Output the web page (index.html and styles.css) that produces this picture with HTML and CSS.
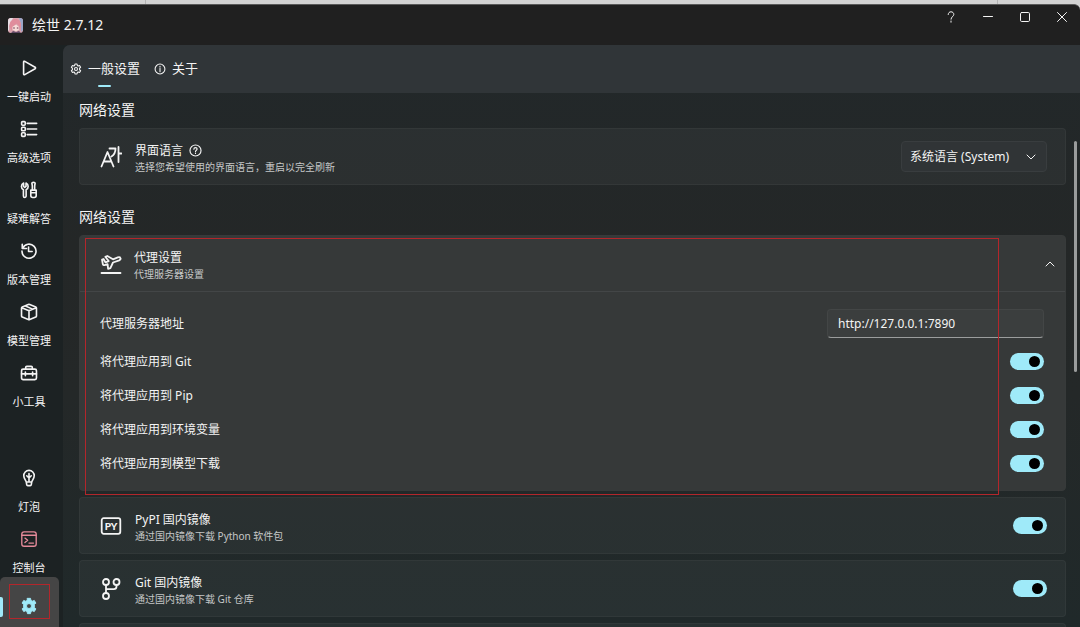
FILE: index.html
```html
<!DOCTYPE html>
<html lang="zh-CN">
<head>
    <meta charset="UTF-8">
    <meta name="viewport" content="width=device-width, initial-scale=1.0">
    <title>绘世 2.7.12</title>
    <link rel="stylesheet" href="styles.css">
</head>
<body>
    <div class="desktop-strip"><span></span><span></span></div>
    <div class="window">
        <header class="titlebar">
            <svg class="app-icon" viewBox="0 0 15 15">
                <rect width="15" height="15" rx="3" fill="#d9a3ae"/>
                <path d="M0 3a3 3 0 0 1 3-3h2L1 8v5L0 12z" fill="#e9dfe6"/>
                <path d="M11 0h1a3 3 0 0 1 3 3v9l-2 2V6z" fill="#9aa6c8"/>
                <path d="M1.500 8C1.500 3 4.500 1 7.500 1S13 3 13 7.500L12.500 13 11 8 8.500 5.500 5 8.500 3.500 13z" fill="#e08d9c"/>
                <path d="M4.500 8.800 8.200 6.500l2.800 2.500v2.500L8 13.500l-3.500-2z" fill="#f7dcd8"/>
                <rect x="5.200" y="9.400" width="1.600" height="1.200" fill="#7d4a62"/>
                <rect x="8.800" y="9.400" width="1.600" height="1.200" fill="#7d4a62"/>
                <path d="M3 15l2-2 3 1 3-1 2 2z" fill="#604a65"/>
            </svg>
            <h1>绘世 2.7.12</h1>
            <div class="window-buttons">
                <button aria-label="帮助"><svg viewBox="0 0 12 12"><path d="M3.200 3.500C3.200 1.900 4.400.8 6 .8s2.800 1.100 2.800 2.600c0 2-2.800 2.500-2.800 4.800M6 10v1.200"/></svg></button>
                <button aria-label="最小化"><svg viewBox="0 0 12 12"><path d="M1.500 5.500h9"/></svg></button>
                <button aria-label="最大化"><svg viewBox="0 0 12 12"><rect x="1.500" y="1.500" width="9" height="9" rx="1.200"/></svg></button>
                <button aria-label="关闭"><svg viewBox="0 0 12 12"><path d="M1.500 1.500l9 9M10.500 1.500l-9 9"/></svg></button>
            </div>
        </header>

        <div class="main">
            <nav class="sidebar">
                <a class="nav-item" href="#launch">
                    <svg viewBox="0 0 20 20"><path d="M4 3.300v13.400c0 .7.700 1 1.300.7l11.500-6.600c.6-.4.6-1.200 0-1.600L5.300 2.600C4.700 2.300 4 2.600 4 3.300z"/></svg>
                    <span>一键启动</span>
                </a>
                <a class="nav-item" href="#advanced">
                    <svg viewBox="0 0 20 20"><rect x="1.800" y="1.800" width="4" height="4" rx="1"/><rect x="1.800" y="8" width="4" height="4" rx="1"/><rect x="1.800" y="14.200" width="4" height="4" rx="1"/><path d="M8 3.800h10.500M8 10h10.500M8 16.200h10.500"/></svg>
                    <span>高级选项</span>
                </a>
                <a class="nav-item" href="#troubleshoot">
                    <svg viewBox="0 0 20 20"><path d="M4 2.200C2.500 2.900 1.600 4.300 1.600 6c0 1.600.9 3 2.200 3.700v7c0 .9.700 1.600 1.500 1.600s1.500-.7 1.500-1.600v-7C8.200 9 9.100 7.600 9.100 6c0-1.700-.9-3.100-2.400-3.800V6L5.300 7.200 4 6z"/><path d="M13.200 2.500c0-.7.900-1 1.800-1s1.800.3 1.800 1l-.5 3v4.700h-2.600V5.500zM12 10.200h6v6c0 1.200-1 2.100-2.100 2.100h-1.800c-1.200 0-2.100-1-2.100-2.100zM12 13h6"/></svg>
                    <span>疑难解答</span>
                </a>
                <a class="nav-item" href="#versions">
                    <svg viewBox="0 0 20 20"><path d="M2.500 2.500v4.700h4.700M2.900 7A7.800 7.800 0 1 1 2.200 10M9.500 5.500v5h4"/></svg>
                    <span>版本管理</span>
                </a>
                <a class="nav-item" href="#models">
                    <svg viewBox="0 0 20 20"><path d="M9.200 1.700 2.500 4.500c-.5.200-.8.600-.8 1.100v8.800c0 .5.300 1 .8 1.200l6.700 2.700c.5.200 1.100.2 1.600 0l6.700-2.700c.5-.2.800-.7.800-1.200V5.600c0-.5-.3-.9-.8-1.100l-6.700-2.800c-.5-.2-1.100-.2-1.600 0zM2 5.200l8 3.300 8-3.300M10 8.500v10M6 3.300l8 3.500"/></svg>
                    <span>模型管理</span>
                </a>
                <a class="nav-item" href="#tools">
                    <svg viewBox="0 0 20 20"><rect x="1.700" y="5.700" width="16.600" height="11.600" rx="1.800"/><path d="M6.300 5.500V4c0-.8.600-1.300 1.300-1.300h4.800c.7 0 1.300.5 1.300 1.300v1.500M1.700 11h16.600M6 9v4M14 9v4"/></svg>
                    <span>小工具</span>
                </a>
                <a class="nav-item nav-bottom" href="#theme">
                    <svg viewBox="0 0 20 20"><path d="M7 14.500c-.3-1.800-2.800-3.600-2.800-7A5.800 5.800 0 0 1 10 1.500a5.800 5.800 0 0 1 5.800 6c0 3.400-2.500 5.200-2.800 7zM7 14.500l.4 2.700c.1.800.6 1.300 1.300 1.300h2.600c.7 0 1.200-.5 1.300-1.300l.4-2.700M10 5v9M7.500 7.500 10 10l2.500-2.500"/></svg>
                    <span>灯泡</span>
                </a>
                <a class="nav-item" href="#console">
                    <svg class="pink" viewBox="0 0 20 20"><rect x="2" y="2" width="16" height="16" rx="2.500"/><path d="M2 5.800h16M5.500 9l3 2.500-3 2.500M10 14.500h5"/></svg>
                    <span>控制台</span>
                </a>
                <a class="nav-item active" href="#settings" aria-label="设置">
                    <svg class="gear" viewBox="0 0 20 20"><path fill-rule="evenodd" d="M8.300 1.500h3.400l.5 2.300 1.500.8 2.200-.8 1.800 3-1.700 1.600v3.200l1.700 1.600-1.800 3-2.200-.8-1.500.8-.5 2.300H8.300l-.5-2.300-1.500-.8-2.200.8-1.800-3L4 11.600V8.400L2.300 6.800l1.800-3 2.200.8 1.500-.8zM10 7.200a2.800 2.800 0 1 0 0 5.600 2.800 2.800 0 0 0 0-5.600z"/></svg>
                    <i class="mark nav-mark"></i>
                </a>
            </nav>

            <section class="content">
                <div class="tabs">
                    <a class="tab selected" href="#general">
                        <svg viewBox="0 0 20 20"><path d="M8.300 1.800h3.400l.5 2.300 1.500.8 2.200-.8 1.800 3-1.700 1.500v2.800l1.700 1.500-1.800 3-2.200-.8-1.500.8-.5 2.300H8.300l-.5-2.300-1.500-.8-2.200.8-1.800-3L4 11.400V8.600L2.300 7.100l1.800-3 2.200.8 1.500-.8z"/><circle cx="10" cy="10" r="2.500"/></svg>
                        <span>一般设置</span>
                    </a>
                    <a class="tab" href="#about">
                        <svg viewBox="0 0 20 20"><circle cx="10" cy="10" r="8.200"/><path d="M10 9v5.500M10 5.500v1"/></svg>
                        <span>关于</span>
                    </a>
                </div>

                <div class="page">
                    <div class="settings">
                        <h2>网络设置</h2>
                        <div class="card">
                            <svg class="card-icon" viewBox="0 0 22 22"><path d="M1.500 20.500 7.500 6l6 14.500M3.800 15.500h7.600M9.500 2.500h6c0 4-1.500 6.500-4 8M18.500 1v15M18.500 7.500h3"/></svg>
                            <div class="card-text">
                                <label for="language">界面语言 <svg viewBox="0 0 20 20"><circle cx="10" cy="10" r="8.500"/><path d="M7.500 8c0-1.500 1-2.500 2.500-2.500s2.500 1 2.500 2.300c0 1.700-2.500 2-2.500 3.900M10 14v.5"/></svg></label>
                                <p>选择您希望使用的界面语言，重启以完全刷新</p>
                            </div>
                            <div class="select-box">
                                <select id="language">
                                    <option>系统语言 (System)</option>
                                </select>
                                <svg viewBox="0 0 12 12"><path d="M2 4l4 4 4-4"/></svg>
                            </div>
                        </div>

                        <h2>网络设置</h2>
                        <div class="expander">
                            <div class="expander-head">
                                <svg class="card-icon" viewBox="0 0 22 22"><path d="M1.500 20h19M2 6.500l.8 4.500c.2 1 .9 1.400 1.800 1.100l3-.9.500 4.600 2.300-.7 2.600-5.600 6.200-2.200c1.200-.5 1.700-1.500 1.300-2.200-.4-.9-1.500-1.100-2.700-.7L13 6.300 7.300 3l-2 .8 3.400 4.300-3.300 1.200L3.500 6z"/></svg>
                                <div class="card-text">
                                    <h3>代理设置</h3>
                                    <p>代理服务器设置</p>
                                </div>
                                <button class="collapse" aria-label="折叠"><svg viewBox="0 0 12 12"><path d="M2 8l4-4 4 4"/></svg></button>
                            </div>
                            <div class="expander-body">
                                <div class="row address">
                                    <label for="proxy">代理服务器地址</label>
                                    <input type="text" id="proxy" value="http://127.0.0.1:7890">
                                </div>
                                <div class="row">
                                    <label for="git">将代理应用到 Git</label>
                                    <input type="checkbox" class="toggle" id="git" checked>
                                </div>
                                <div class="row">
                                    <label for="pip">将代理应用到 Pip</label>
                                    <input type="checkbox" class="toggle" id="pip" checked>
                                </div>
                                <div class="row">
                                    <label for="env">将代理应用到环境变量</label>
                                    <input type="checkbox" class="toggle" id="env" checked>
                                </div>
                                <div class="row">
                                    <label for="download">将代理应用到模型下载</label>
                                    <input type="checkbox" class="toggle" id="download" checked>
                                </div>
                            </div>
                            <i class="mark proxy-mark"></i>
                        </div>

                        <div class="card">
                            <svg class="card-icon" viewBox="0 0 22 22"><rect x="1.700" y="3.200" width="18.600" height="15.600" rx="2"/><text x="11" y="15">PY</text></svg>
                            <div class="card-text">
                                <label for="pypi-mirror">PyPI 国内镜像</label>
                                <p>通过国内镜像下载 Python 软件包</p>
                            </div>
                            <input type="checkbox" class="toggle" id="pypi-mirror" checked>
                        </div>
                        <div class="card">
                            <svg class="card-icon" viewBox="0 0 22 22"><circle cx="6" cy="4" r="3"/><circle cx="16.500" cy="4" r="3"/><circle cx="6" cy="18" r="3"/><path d="M6 7v8M16.500 7v1.500c0 1.700-1 2.700-2.700 2.700H6"/></svg>
                            <div class="card-text">
                                <label for="git-mirror">Git 国内镜像</label>
                                <p>通过国内镜像下载 Git 仓库</p>
                            </div>
                            <input type="checkbox" class="toggle" id="git-mirror" checked>
                        </div>
                        <div class="card"></div>
                    </div>
                    <div class="scrollbar"></div>
                </div>
            </section>
        </div>
    </div>
</body>
</html>
```
FILE: styles.css
```css
* {
    box-sizing: border-box;
}
body {
    margin: 0;
    height: 100vh;
    display: flex;
    flex-direction: column;
    overflow: hidden;
    background-color: #d3d3d3;
    color: #f4f4f4;
    font-family: "Noto Sans", "Noto Sans CJK SC", sans-serif;
    font-size: 12px;
}
h1, h2, h3, p {
    margin: 0;
    font-weight: normal;
}
a {
    color: inherit;
    text-decoration: none;
}
button, input, select {
    font: inherit;
    color: inherit;
    margin: 0;
}
button {
    padding: 0;
    border: none;
    background: none;
}
svg {
    display: block;
    flex-shrink: 0;
    fill: none;
    stroke: currentColor;
    stroke-width: 1.8;
    stroke-linejoin: round;
    stroke-linecap: round;
}
.desktop-strip {
    flex: 0 0 4px;
    display: flex;
    justify-content: space-between;
    padding: 0 82px 0 145px;
}
.desktop-strip span {
    width: 1px;
    background-color: #b4b4b4;
}
.window {
    flex: 1;
    min-height: 0;
    display: flex;
    flex-direction: column;
    border-top: 1px solid #5a5a5a;
    border-radius: 0 6px 0 0;
    background-color: #202020;
    overflow: hidden;
}

/* title bar */
.titlebar {
    flex: 0 0 40px;
    display: flex;
    align-items: center;
    padding-left: 8px;
}
.titlebar h1 {
    flex: 1;
    padding-bottom: 2px;
    font-size: 14px;
}
.app-icon {
    width: 15px;
    height: 15px;
    margin-right: 9px;
    stroke: none;
}
.window-buttons {
    display: flex;
    align-self: flex-start;
}
.window-buttons button {
    width: 37px;
    height: 24px;
    display: grid;
    place-items: center;
}
.window-buttons svg {
    width: 12px;
    height: 12px;
    stroke-width: 1;
}

/* sidebar */
.main {
    flex: 1;
    min-height: 0;
    display: flex;
    background-color: #1c2223;
}
.sidebar {
    flex: 0 0 63px;
    display: flex;
    flex-direction: column;
    padding-right: 4px;
}
.nav-item {
    height: 61px;
    flex-shrink: 0;
    display: flex;
    flex-direction: column;
    align-items: center;
    gap: 12px;
    padding: 14px 1px 0 0;
    font-size: 11px;
    line-height: 16px;
}
.nav-item svg {
    width: 18px;
    height: 18px;
}
.nav-bottom {
    margin-top: auto;
}
.nav-item .pink {
    color: #e58a9a;
    stroke-width: 1.5;
}
.nav-item.active {
    position: relative;
    height: 50px;
    padding-top: 20px;
    border-radius: 5px 5px 0 0;
    background-color: #454545;
    color: #9feaf9;
}
.nav-item.active::before {
    content: "";
    position: absolute;
    left: 0;
    top: 20px;
    width: 3px;
    height: 20px;
    border-radius: 0 2px 2px 0;
    background-color: #9feaf9;
}
.nav-item .gear {
    fill: currentColor;
    stroke-width: 1;
}

/* red annotation frames */
.mark {
    position: absolute;
    border: 1px solid #b3262b;
    pointer-events: none;
}
.nav-mark {
    top: 7px;
    left: 9px;
    right: 9px;
    bottom: 8px;
}
.proxy-mark {
    top: 2px;
    left: 5px;
    right: 66px;
    bottom: -5px;
}

/* content */
.content {
    flex: 1;
    min-width: 0;
    display: flex;
    flex-direction: column;
    border-radius: 7px 0 0 0;
    background: linear-gradient(#22282a, #242727 35%, #242828 60%, #20292a);
    overflow: hidden;
}
.tabs {
    flex: 0 0 48px;
    display: flex;
    gap: 14px;
    padding-left: 7px;
    background-color: #303538;
}
.tab {
    position: relative;
    display: flex;
    align-items: center;
    gap: 6px;
    font-size: 13px;
}
.tab svg {
    width: 12px;
    height: 12px;
}
.tab span {
    padding-bottom: 3px;
}
.tab.selected::after {
    content: "";
    position: absolute;
    left: 28px;
    bottom: 6px;
    width: 13px;
    height: 2px;
    border-radius: 1px;
    background-color: #9feaf9;
}
.page {
    flex: 1;
    min-height: 0;
    display: flex;
}
.settings {
    flex: 1;
    min-width: 0;
    padding: 7px 8px 0 16px;
    overflow: hidden;
}
.settings h2 {
    font-size: 14px;
    line-height: 20px;
    margin-bottom: 8px;
}
.card + h2 {
    margin-top: 22px;
}
.card, .expander {
    border: 1px solid rgba(255, 255, 255, 0.04);
    border-radius: 4px;
    background-color: rgba(255, 255, 255, 0.04);
}
.card {
    height: 57px;
    display: flex;
    align-items: center;
    gap: 13px;
    padding: 0 18px 0 20px;
}
.card + .card, .expander + .card {
    margin-top: 6px;
}
.card-icon {
    width: 22px;
    height: 22px;
}
.card-icon text {
    font-family: Lato, sans-serif;
    font-size: 10px;
    font-weight: 900;
    text-anchor: middle;
    fill: currentColor;
    stroke: none;
}
.card-text {
    flex: 1;
    padding-top: 3px;
}
.card-text label, .card-text h3 {
    display: flex;
    align-items: center;
    gap: 6px;
    font-size: 12px;
    line-height: 17px;
}
.card-text label svg {
    width: 13px;
    height: 13px;
}
.card-text p {
    font-size: 10px;
    line-height: 16px;
    color: #c5c7c7;
}
.select-box {
    position: relative;
    width: 146px;
}
.select-box select {
    display: block;
    appearance: none;
    width: 100%;
    height: 31px;
    padding: 0 28px 0 8px;
    border: 1px solid #393d3f;
    border-radius: 4px;
    background-color: #303436;
}
.select-box svg {
    position: absolute;
    top: 10px;
    right: 10px;
    width: 12px;
    height: 12px;
    stroke-width: 1;
    pointer-events: none;
}
.expander {
    position: relative;
    background-color: #363939;
    border-color: #373a3a;
}
.expander-head {
    height: 56px;
    display: flex;
    align-items: center;
    gap: 12px;
    padding: 0 9px 0 20px;
    border-bottom: 1px solid #434647;
}
.collapse {
    width: 12px;
    height: 12px;
}
.collapse svg {
    stroke-width: 1;
}
.expander-body {
    padding: 16px 21px 10px 20px;
}
.row {
    height: 34px;
    display: flex;
    align-items: center;
    justify-content: space-between;
}
.row.address {
    height: 30px;
    margin-bottom: 6px;
}
input[type="text"] {
    width: 217px;
    height: 29px;
    padding: 0 10px;
    border: 1px solid #434646;
    border-bottom-color: #9b9d9d;
    border-radius: 4px;
    background-color: #3b3e3e;
}
.toggle {
    appearance: none;
    display: flex;
    align-items: center;
    justify-content: flex-end;
    width: 34px;
    height: 17px;
    padding-right: 4px;
    border-radius: 9px;
    background-color: #9feaf9;
}
.toggle::before {
    content: "";
    width: 11px;
    height: 11px;
    border-radius: 50%;
    background-color: #000;
}
.scrollbar {
    width: 3px;
    height: 231px;
    margin: 48px 3px 0 0;
    border-radius: 2px;
    background-color: #9a9c9c;
}
```
